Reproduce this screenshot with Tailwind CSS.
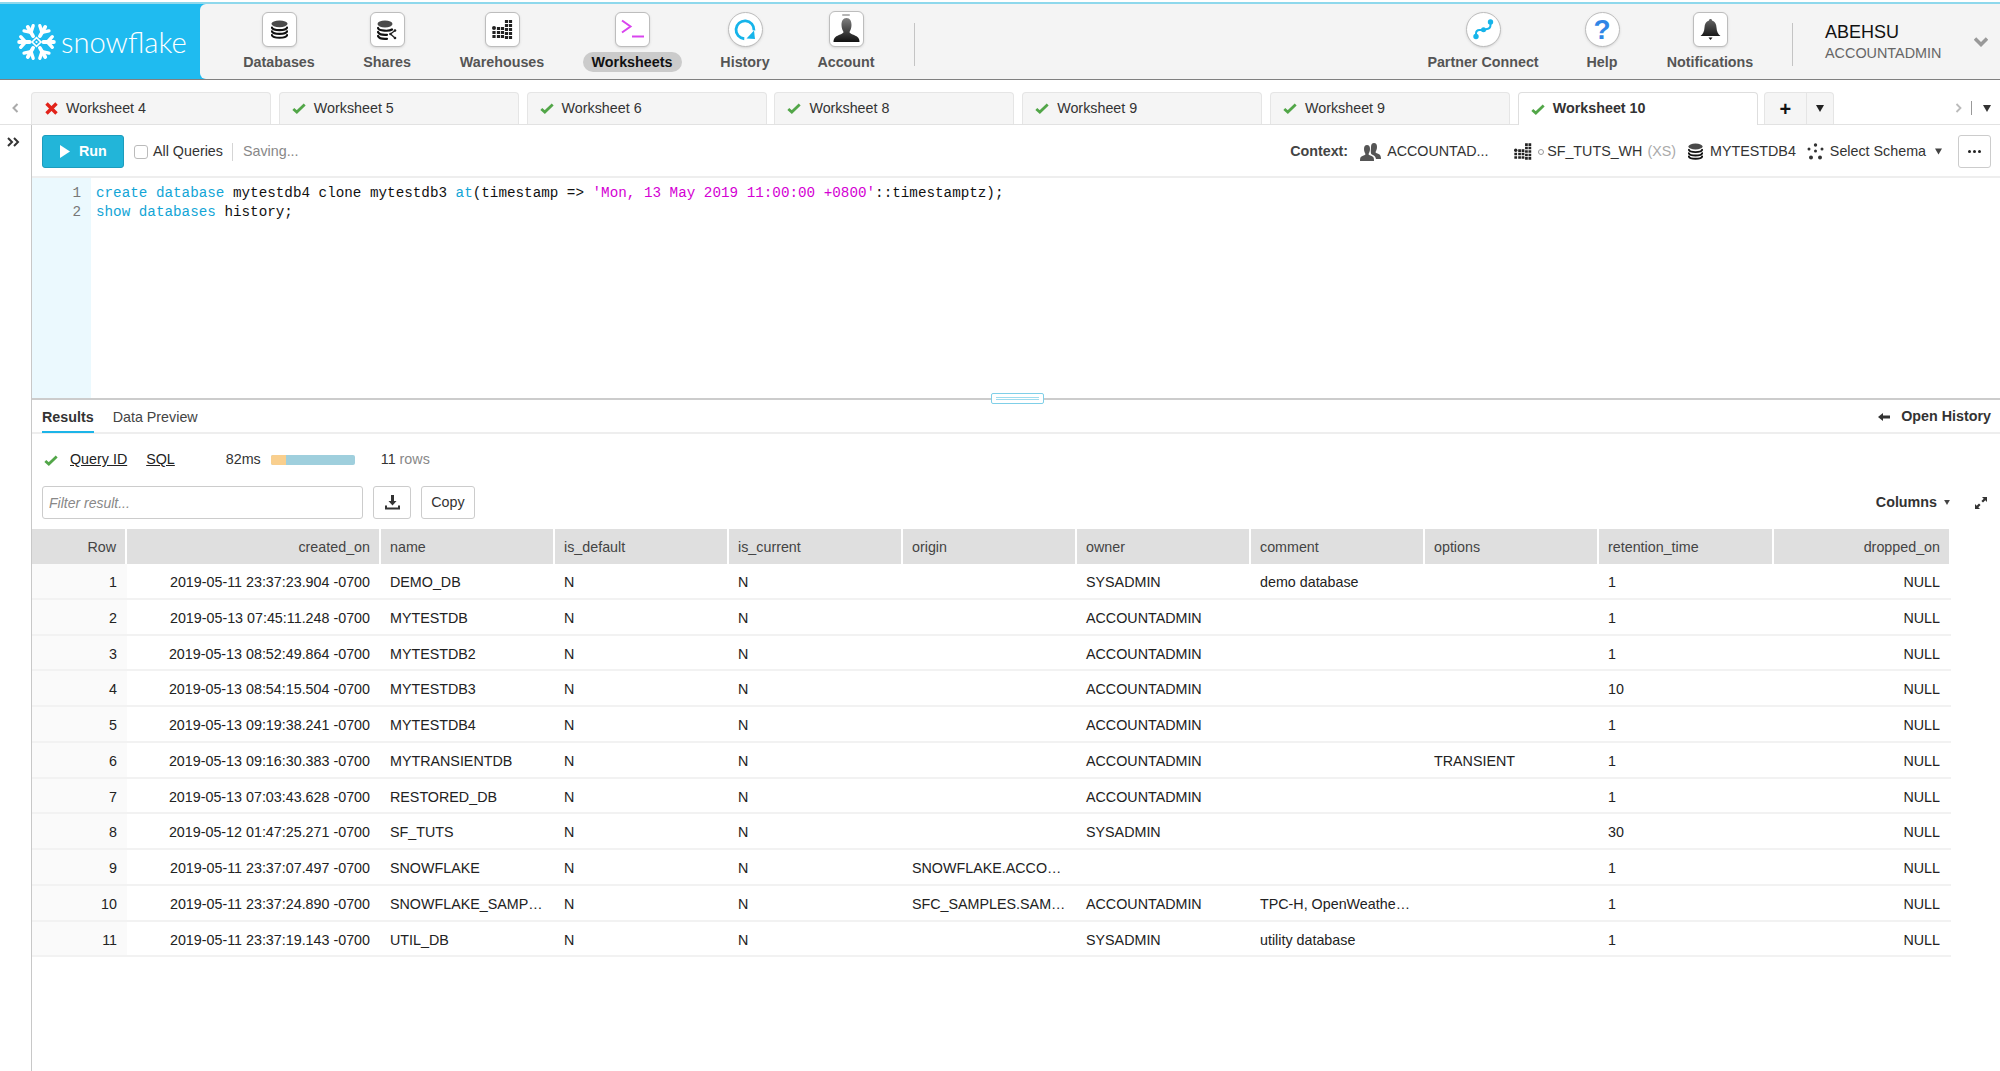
<!DOCTYPE html>
<html lang="en">
<head>
  <meta charset="UTF-8" />
  <title>Worksheets - Snowflake</title>
  <script src="https://cdn.jsdelivr.net/npm/@tailwindcss/browser@4"></script>
</head>
<body class="bg-white text-[#222] font-['Liberation_Sans',Arial,sans-serif] text-[14.300px] h-[1071px] w-[2000px] overflow-hidden">

<!-- Shared icon shapes -->
<svg class="hidden">
  <symbol id="db" viewBox="0 0 18 20">
    <ellipse cx="9" cy="4" rx="8.500" ry="3.600" fill="#4a4a4a"/>
    <path d="M1 8c1 3.600 15 3.600 16 0M1 12c1 3.600 15 3.600 16 0M1 16c1 3.600 15 3.600 16 0" fill="none" stroke="#111" stroke-width="2.300" stroke-linecap="round"/>
  </symbol>
  <symbol id="wh" viewBox="0 0 21 19">
    <circle cx="2" cy="8" r="2" fill="#222"/>
    <path d="M2 11v8M6.500 7v12M10.500 7v12M14.500 0v19M18.500 0v19" fill="none" stroke="#222" stroke-width="3.200" stroke-dasharray="3 1"/>
  </symbol>
  <symbol id="ok" viewBox="0 0 16 12">
    <path d="M1.500 6.500 5.500 10 14.500 1.500" fill="none" stroke="#52a648" stroke-width="3.200"/>
  </symbol>
</svg>

<!-- Top navigation -->
<header class="h-[80px] flex flex-col border-b border-[#808080]">
  <div class="h-[2px] bg-white"></div>
  <div class="h-[2px] bg-[#8ed8ec]"></div>
  <div class="flex-1 flex bg-[#1fbbf0]">
    <div class="w-[200px] flex items-center pl-[16px] gap-[4px] text-white">
      <svg width="41" height="40" viewBox="-19 -19 38 38" fill="none" stroke="#fff" stroke-linecap="round">
        <g stroke-width="3.600" transform="rotate(30)">
          <g id="arm"><path d="M0-6.500V-16.500"/><path d="M0-10.500-5-15M0-10.500 5-15" stroke-width="3.200"/></g>
          <use href="#arm" transform="rotate(60)"/>
          <use href="#arm" transform="rotate(120)"/>
          <use href="#arm" transform="rotate(180)"/>
          <use href="#arm" transform="rotate(240)"/>
          <use href="#arm" transform="rotate(300)"/>
        </g>
        <path d="M0-4.200 4.200 0 0 4.200-4.200 0Z" stroke-width="1.500"/>
        <circle r="1" fill="#fff" stroke="none"/>
      </svg>
      <span class="font-['Lato',sans-serif] font-light text-[29.200px] leading-none">snowflake</span>
    </div>
    <nav class="flex-1 flex bg-[#f4f4f4] rounded-l-[6px] font-bold text-[#555]">
      <div class="w-[29px]"></div>
      <div class="w-[100px] flex flex-col items-center pt-[8px]">
        <span class="w-[35px] h-[35px] bg-white rounded-[6px] border border-[#bdbdbd] shadow-sm flex items-center justify-center">
          <svg width="17" height="19"><use href="#db"/></svg>
        </span>
        <span class="h-[20px] mt-[5px] leading-[20px]">Databases</span>
      </div>
      <div class="w-[116px] flex flex-col items-center pt-[8px]">
        <span class="w-[35px] h-[35px] bg-white rounded-[6px] border border-[#bdbdbd] shadow-sm flex items-center justify-center">
          <svg width="20" height="20" viewBox="0 0 20 20">
            <ellipse cx="8" cy="4" rx="7.500" ry="3.400" fill="#4a4a4a"/>
            <path d="M1 8c1 3 11 3.500 14 1.500M1 12c1 2.500 6 3 9 2.800M1 16c1 2.500 6 3 9 2.800" fill="none" stroke="#111" stroke-width="2.200" stroke-linecap="round"/>
            <path d="M18 10.500 13.500 14l4.500 4" fill="none" stroke="#222" stroke-width="1.300"/>
            <circle cx="18" cy="10.500" r="1.300" fill="#222"/><circle cx="13.500" cy="14" r="1.300" fill="#222"/><circle cx="18" cy="18" r="1.300" fill="#222"/>
          </svg>
        </span>
        <span class="h-[20px] mt-[5px] leading-[20px]">Shares</span>
      </div>
      <div class="w-[114px] flex flex-col items-center pt-[8px]">
        <span class="w-[35px] h-[35px] bg-white rounded-[6px] border border-[#bdbdbd] shadow-sm flex items-center justify-center">
          <svg width="21" height="19"><use href="#wh"/></svg>
        </span>
        <span class="h-[20px] mt-[5px] leading-[20px]">Warehouses</span>
      </div>
      <div class="w-[146px] flex flex-col items-center pt-[8px]">
        <span class="w-[35px] h-[35px] bg-white rounded-[6px] border border-[#bdbdbd] shadow-sm flex items-center justify-center">
          <svg width="27" height="25" viewBox="0 0 27 25" fill="none" stroke="#d944ee" stroke-width="2">
            <path d="M3 3.500 11.500 9.500 3 15.500"/><path d="M13 19.500h12"/>
          </svg>
        </span>
        <span class="h-[20px] mt-[5px] leading-[20px] w-[99px] text-center rounded-full bg-[#cbcbcb] text-[#111]">Worksheets</span>
      </div>
      <div class="w-[80px] flex flex-col items-center pt-[8px]">
        <span class="w-[35px] h-[35px] bg-white rounded-full border border-[#bdbdbd] shadow-sm flex items-center justify-center">
          <svg width="23" height="23" viewBox="0 0 23 23" fill="none">
            <path d="M9 20.500A9 9 0 1 1 19.800 13.500" stroke="#16b4ea" stroke-width="2.800" transform="rotate(-8 11.500 11.500)"/>
            <path d="M12.500 20.500 21 21 20 12.500Z" fill="#16b4ea"/>
          </svg>
        </span>
        <span class="h-[20px] mt-[5px] leading-[20px]">History</span>
      </div>
      <div class="w-[122px] flex flex-col items-center pt-[7px]">
        <span class="w-[35px] h-[36px] bg-white rounded-[6px] border border-[#bdbdbd] shadow-sm flex items-center justify-center overflow-hidden">
          <svg width="33" height="34" viewBox="0 0 33 34">
            <defs><linearGradient id="person" x1="0" y1="0" x2="0" y2="1"><stop offset="0" stop-color="#808080"/><stop offset="1" stop-color="#111"/></linearGradient></defs>
            <rect x="12" y="2" width="8" height="2" rx="1" fill="#b5b5b5"/>
            <path d="M16.500 6c3.500 0 5 3 5 7 0 3-1 5-2 7 0 2 6 3 8 5 1.500 1 2 3 2 5H3.500c0-2 .5-4 2-5 2-2 8-3 8-5-1-2-2-4-2-7 0-4 1.500-7 5-7Z" fill="url(#person)"/>
          </svg>
        </span>
        <span class="h-[20px] mt-[5px] leading-[20px]">Account</span>
      </div>
      <div class="ml-[7px] mt-[19px] w-[1px] h-[43px] bg-[#c4c4c4]"></div>

      <div class="ml-auto w-[134px] flex flex-col items-center pt-[8px]">
        <span class="w-[35px] h-[35px] bg-white rounded-full border border-[#bdbdbd] shadow-sm flex items-center justify-center">
          <svg width="25" height="25" viewBox="0 0 25 25" fill="none" stroke="#16b4ea">
            <path d="M5 19.500V16.500Q5 13 8.500 13H12.500L16 12Q19.500 11.500 19.500 8V5" stroke-width="2"/>
            <circle cx="5" cy="19.500" r="2.700" fill="#16b4ea" stroke="none"/>
            <circle cx="12.500" cy="12.800" r="2.500" fill="#16b4ea" stroke="none"/>
            <circle cx="19.500" cy="5" r="2.700" fill="#16b4ea" stroke="none"/>
          </svg>
        </span>
        <span class="h-[20px] mt-[5px] leading-[20px]">Partner Connect</span>
      </div>
      <div class="w-[104px] flex flex-col items-center pt-[8px]">
        <span class="w-[35px] h-[35px] bg-white rounded-full border border-[#bdbdbd] shadow-sm flex items-center justify-center text-[#2f86e6] text-[28px] leading-none">?</span>
        <span class="h-[20px] mt-[5px] leading-[20px]">Help</span>
      </div>
      <div class="w-[112px] flex flex-col items-center pt-[8px]">
        <span class="w-[35px] h-[35px] bg-white rounded-[6px] border border-[#bdbdbd] shadow-sm flex items-center justify-center">
          <svg width="21" height="23" viewBox="0 0 21 23">
            <defs><linearGradient id="bell" x1="0" y1="0" x2="0" y2="1"><stop offset="0" stop-color="#666"/><stop offset="1" stop-color="#1a1a1a"/></linearGradient></defs>
            <path d="M10.500 1c1 0 1.500 .6 1.500 1.500 3 1 4.300 3.500 4.500 7 .2 4 1.500 6.500 4 8.500H.5c2.500-2 3.800-4.500 4-8.500.2-3.500 1.500-6 4.500-7C9 1.600 9.500 1 10.500 1Z" fill="url(#bell)"/>
            <path d="M8.500 19.500h4l-2 2.500Z" fill="#111"/>
          </svg>
        </span>
        <span class="h-[20px] mt-[5px] leading-[20px]">Notifications</span>
      </div>
      <div class="ml-[26px] mt-[19px] w-[1px] h-[43px] bg-[#c4c4c4]"></div>
      <div class="ml-[32px] w-[149px] flex flex-col font-normal">
        <span class="text-[18px] text-[#111] leading-[22px] mt-[17px]">ABEHSU</span>
        <span class="text-[14.400px] text-[#666] leading-[18px] mt-[1px]">ACCOUNTADMIN</span>
      </div>
      <svg class="mr-[12px] mt-[33px]" width="14" height="10" viewBox="0 0 14 10" fill="none" stroke="#999" stroke-width="3.500"><path d="M1 1.500 7 7.500 13 1.500"/></svg>
    </nav>
  </div>
</header>

<!-- Worksheet tabs -->
<div class="h-[45px] pt-[12px] flex border-b border-[#e2e2e2]">
  <div class="w-[31px] flex items-center justify-center text-[#aaa]">
    <svg width="7" height="10" viewBox="0 0 7 10" fill="none" stroke="#aaa" stroke-width="2"><path d="M5.500 1 1.500 5 5.500 9"/></svg>
  </div>
  <div class="flex gap-[7.800px]">
    <div class="w-[240px] bg-[#f5f5f5] border border-b-0 border-[#e5e5e5] rounded-t-[4px] flex items-center pl-[13px] gap-[8px] text-[#333]">
      <svg width="13" height="13" viewBox="0 0 13 13" fill="none" stroke="#e2231a" stroke-width="3.400"><path d="M1.500 1.500 11.500 11.500M11.500 1.500 1.500 11.500"/></svg>
      <span>Worksheet 4</span>
    </div>
    <div class="w-[240px] bg-[#f5f5f5] border border-b-0 border-[#e5e5e5] rounded-t-[4px] flex items-center pl-[12px] gap-[8px] text-[#333]"><svg width="14" height="11"><use href="#ok"/></svg><span>Worksheet 5</span></div>
    <div class="w-[240px] bg-[#f5f5f5] border border-b-0 border-[#e5e5e5] rounded-t-[4px] flex items-center pl-[12px] gap-[8px] text-[#333]"><svg width="14" height="11"><use href="#ok"/></svg><span>Worksheet 6</span></div>
    <div class="w-[240px] bg-[#f5f5f5] border border-b-0 border-[#e5e5e5] rounded-t-[4px] flex items-center pl-[12px] gap-[8px] text-[#333]"><svg width="14" height="11"><use href="#ok"/></svg><span>Worksheet 8</span></div>
    <div class="w-[240px] bg-[#f5f5f5] border border-b-0 border-[#e5e5e5] rounded-t-[4px] flex items-center pl-[12px] gap-[8px] text-[#333]"><svg width="14" height="11"><use href="#ok"/></svg><span>Worksheet 9</span></div>
    <div class="w-[240px] bg-[#f5f5f5] border border-b-0 border-[#e5e5e5] rounded-t-[4px] flex items-center pl-[12px] gap-[8px] text-[#333]"><svg width="14" height="11"><use href="#ok"/></svg><span>Worksheet 9</span></div>
    <div class="w-[240px] h-[33px] bg-white border border-b-0 border-[#dedede] rounded-t-[4px] flex items-center pl-[12px] gap-[8px] font-bold text-[#333] relative z-10"><svg width="14" height="11"><use href="#ok"/></svg><span>Worksheet 10</span></div>
  </div>
  <div class="ml-[6px] w-[70px] flex bg-[#f5f5f5] border border-b-0 border-[#e5e5e5] rounded-t-[4px]">
    <span class="w-[42px] flex items-center justify-center border-r border-[#e5e5e5] text-[20px] font-bold text-[#111]">+</span>
    <span class="flex-1 flex items-center justify-center">
      <svg width="8" height="7" viewBox="0 0 8 7"><path d="M0 0h8L4 7Z" fill="#222"/></svg>
    </span>
  </div>
  <div class="ml-auto flex items-center pr-[9px]">
    <svg width="7" height="10" viewBox="0 0 7 10" fill="none" stroke="#bbb" stroke-width="1.800"><path d="M1.500 1 5.500 5 1.500 9"/></svg>
    <span class="ml-[9px] w-[1px] h-[14px] bg-[#999]"></span>
    <svg class="ml-[11px]" width="8" height="7" viewBox="0 0 8 7"><path d="M0 0h8L4 7Z" fill="#333"/></svg>
  </div>
</div>

<div class="flex h-[946px]">
  <!-- Collapsed sidebar -->
  <aside class="w-[32px] border-r border-[#c8c8c8] pt-[12px] pl-[7px]">
    <svg width="13" height="10" viewBox="0 0 13 10" fill="none" stroke="#333" stroke-width="2"><path d="M1 1 5 5 1 9M7 1 11 5 7 9"/></svg>
  </aside>

  <main class="flex-1 flex flex-col min-w-0">
    <!-- Query toolbar -->
    <div class="h-[53px] shrink-0 border-b-2 border-[#eee] flex items-center pt-[2px] pl-[10px]">
      <button class="w-[82px] h-[33px] bg-[#22b5d9] border border-[#1c9cbd] rounded-[3px] flex items-center pl-[17px] gap-[9px] text-white font-bold">
        <svg width="10" height="13" viewBox="0 0 10 13"><path d="M0 0 10 6.500 0 13Z" fill="#fff"/></svg>
        Run
      </button>
      <span class="ml-[10px] w-[14px] h-[14px] bg-white border border-[#bbb] rounded-[3px]"></span>
      <span class="ml-[5px] text-[#333]">All Queries</span>
      <span class="ml-[9px] w-[1px] h-[18px] bg-[#d5d5d5]"></span>
      <span class="ml-[10px] text-[#888]">Saving...</span>

      <span class="ml-auto font-bold text-[#444]">Context:</span>
      <svg class="ml-[12px]" width="21" height="18" viewBox="0 0 21 18" fill="#555">
        <path d="M7 2c2 0 3 1.500 3 4s-1 4-1.500 5c0 1 2 1.500 4 2.500 1 .5 1.500 1.500 1.500 4.500H0c0-3 .5-4 1.500-4.500 2-1 4-1.500 4-2.500C5 10 4 8.500 4 6s1-4 3-4Z"/>
        <path d="M14 0c2 0 3 1.500 3 4s-1 4-1.500 5c0 1 2 1.500 4 2.500 .5 .3 1.500 1.500 1.500 4.500h-5c-.5-2-1-3-2.500-3.800-1-.5-2-1-2.300-1.300C10.500 9 11 7 11 4c0-2.500 1-4 3-4Z"/>
      </svg>
      <span class="ml-[6px] w-[104px] text-[#333] whitespace-nowrap">ACCOUNTAD...</span>
      <svg class="ml-[23px]" width="18" height="17"><use href="#wh"/></svg>
      <span class="ml-[6px] w-[6px] h-[6px] rounded-full border border-[#999]"></span>
      <span class="ml-[3px] text-[#333]">SF_TUTS_WH</span>
      <span class="ml-[5px] text-[#aaa]">(XS)</span>
      <svg class="ml-[12px]" width="15" height="17"><use href="#db"/></svg>
      <span class="ml-[7px] text-[#333]">MYTESTDB4</span>
      <svg class="ml-[11px]" width="17" height="17" viewBox="0 0 17 17" fill="#333">
        <circle cx="8.500" cy="2" r="1.700"/><circle cx="2" cy="6" r="1.500"/><circle cx="15" cy="6" r="1.500"/><circle cx="8.500" cy="8" r="1.500"/><circle cx="4" cy="14.500" r="2"/><circle cx="13" cy="14.500" r="2"/>
      </svg>
      <span class="ml-[6px] text-[#333]">Select Schema</span>
      <svg class="ml-[9px]" width="7" height="7" viewBox="0 0 8 7"><path d="M0 0h8L4 7Z" fill="#444"/></svg>
      <button class="ml-[16px] mr-[9px] w-[33px] h-[33px] bg-white border border-[#ccc] rounded-[3px] flex items-center justify-center gap-[2px]">
        <span class="w-[3px] h-[3px] bg-[#222] rounded-full"></span>
        <span class="w-[3px] h-[3px] bg-[#222] rounded-full"></span>
        <span class="w-[3px] h-[3px] bg-[#222] rounded-full"></span>
      </button>
    </div>

    <!-- Editor -->
    <div class="h-[220px] shrink-0 flex font-['Liberation_Mono',monospace] text-[14.280px] leading-[19px]">
      <div class="w-[59px] bg-[#ebf9fe] pt-[6px] pr-[10px] text-right text-[#777]">
        <div>1</div>
        <div>2</div>
      </div>
      <div class="pl-[5px] pt-[6px] text-[#111]">
        <div class="whitespace-pre"><span class="text-[#12a5d6]">create database</span> mytestdb4 clone mytestdb3 <span class="text-[#12a5d6]">at</span>(timestamp =&gt; <span class="text-[#d400d4]">'Mon, 13 May 2019 11:00:00 +0800'</span>::timestamptz);</div>
        <div class="whitespace-pre"><span class="text-[#12a5d6]">show databases</span> history;</div>
      </div>
    </div>

    <!-- Split handle -->
    <div class="h-[2px] shrink-0 bg-[#ccc] relative">
      <div class="absolute left-[959px] top-[-5px] w-[53px] h-[11px] bg-white border border-[#7fcfe8] rounded-[2px] flex items-center justify-center">
        <span class="w-[43px] h-[3px] border-y border-[#9fdcee]"></span>
      </div>
    </div>

    <!-- Results header -->
    <div class="h-[34px] shrink-0 border-b-2 border-[#eee] flex items-stretch pl-[10px] pr-[9px]">
      <span class="h-[33px] border-b-2 border-[#1cb4e8] font-bold text-[#333] leading-[34px]">Results</span>
      <span class="ml-[19px] text-[#444] leading-[34px]">Data Preview</span>
      <span class="ml-auto flex items-center gap-[11px] font-bold text-[#333] pt-[2px]">
        <svg width="12" height="8" viewBox="0 0 12 8"><path d="M0 4 5 0V2.500H12V5.500H5V8Z" fill="#333"/></svg>
        Open History
      </span>
    </div>

    <!-- Query summary -->
    <div class="h-[52px] shrink-0 flex items-center pl-[12px]">
      <svg width="14" height="11"><use href="#ok"/></svg>
      <a class="ml-[12px] underline text-[#222]">Query ID</a>
      <a class="ml-[19px] underline text-[#222]">SQL</a>
      <span class="ml-[51px] text-[#333]">82ms</span>
      <span class="ml-[10px] w-[84px] h-[10px] rounded-[2px] overflow-hidden flex bg-[#9fcfdd]"><span class="w-[15px] bg-[#f9cf8e]"></span></span>
      <span class="ml-[26px] text-[#333]">11 <span class="text-[#888]">rows</span></span>
    </div>

    <!-- Filter row -->
    <div class="h-[33px] shrink-0 flex items-center pl-[10px]">
      <input class="w-[321px] h-[33px] border border-[#ccc] rounded-[3px] px-[6px] italic text-[14px] placeholder:text-[#888] outline-none" placeholder="Filter result..." />
      <button class="ml-[10px] w-[38px] h-[33px] bg-white border border-[#ccc] rounded-[3px] flex items-center justify-center">
        <svg width="15" height="15" viewBox="0 0 15 15" fill="none" stroke="#333"><path d="M7.500 0V8" stroke-width="3"/><path d="M3.500 6h8l-4 4.500Z" fill="#333" stroke="none"/><path d="M1 10.500V13.500H14V10.500" stroke-width="2"/></svg>
      </button>
      <button class="ml-[10px] w-[54px] h-[33px] bg-white border border-[#ccc] rounded-[3px] text-[#333]">Copy</button>
      <span class="ml-auto font-bold text-[#333]">Columns</span>
      <svg class="ml-[7px]" width="6" height="5" viewBox="0 0 8 7"><path d="M0 0h8L4 7Z" fill="#444"/></svg>
      <svg class="ml-[25px] mr-[13px]" width="12" height="12" viewBox="0 0 12 12" fill="#333">
        <path d="M7 0h5v5L10.300 3.300 8 5.600 6.400 4 8.700 1.700Z"/><path d="M5 12H0V7L1.700 8.700 4 6.400 5.600 8 3.300 10.300Z"/>
      </svg>
    </div>

    <!-- Results table -->
    <div id="results" class="mt-[10px] w-[1919px] grid grid-cols-[95px_254px_repeat(7,174px)_175px_177px]"></div>
  </main>
</div>

<script>
  const cols = [
    ["Row", true], ["created_on", true], ["name"], ["is_default"], ["is_current"], ["origin"],
    ["owner"], ["comment"], ["options"], ["retention_time"], ["dropped_on", true]
  ];
  const rows = [
    ["2019-05-11 23:37:23.904 -0700", "DEMO_DB", "", "SYSADMIN", "demo database", "", "1"],
    ["2019-05-13 07:45:11.248 -0700", "MYTESTDB", "", "ACCOUNTADMIN", "", "", "1"],
    ["2019-05-13 08:52:49.864 -0700", "MYTESTDB2", "", "ACCOUNTADMIN", "", "", "1"],
    ["2019-05-13 08:54:15.504 -0700", "MYTESTDB3", "", "ACCOUNTADMIN", "", "", "10"],
    ["2019-05-13 09:19:38.241 -0700", "MYTESTDB4", "", "ACCOUNTADMIN", "", "", "1"],
    ["2019-05-13 09:16:30.383 -0700", "MYTRANSIENTDB", "", "ACCOUNTADMIN", "", "TRANSIENT", "1"],
    ["2019-05-13 07:03:43.628 -0700", "RESTORED_DB", "", "ACCOUNTADMIN", "", "", "1"],
    ["2019-05-12 01:47:25.271 -0700", "SF_TUTS", "", "SYSADMIN", "", "", "30"],
    ["2019-05-11 23:37:07.497 -0700", "SNOWFLAKE", "SNOWFLAKE.ACCOUNT_USAGE", "", "", "", "1"],
    ["2019-05-11 23:37:24.890 -0700", "SNOWFLAKE_SAMPLE_DB", "SFC_SAMPLES.SAMPLE_DATA", "ACCOUNTADMIN", "TPC-H, OpenWeather, and more", "", "1"],
    ["2019-05-11 23:37:19.143 -0700", "UTIL_DB", "", "SYSADMIN", "utility database", "", "1"]
  ];

  const head = cols.map(([label, right]) =>
    `<div class="h-[35px] leading-[36px] pl-[9px] pr-[9px] bg-[#dfdfdf] border-r-2 border-white text-[#444] truncate ${right ? "text-right" : ""}">${label}</div>`
  ).join("");

  const cell = (text, cls = "pr-[11px]") =>
    `<div class="h-[35.750px] leading-[36px] pl-[9px] border-b-2 border-[#f2f2f2] truncate ${cls}">${text}</div>`;

  const body = rows.map((r, i) => {
    const [created, name, origin, owner, comment, options, retention] = r;
    return cell(i + 1, "pr-[10px] text-right bg-[#fafafa]") + cell(created, "pr-[11px] text-right") + cell(name) +
      cell("N") + cell("N") + cell(origin) + cell(owner) + cell(comment, "pr-[15px]") + cell(options) +
      cell(retention) + cell("NULL", "pr-[11px] text-right");
  }).join("");

  document.getElementById("results").innerHTML = head + body;
</script>

</body>
</html>
